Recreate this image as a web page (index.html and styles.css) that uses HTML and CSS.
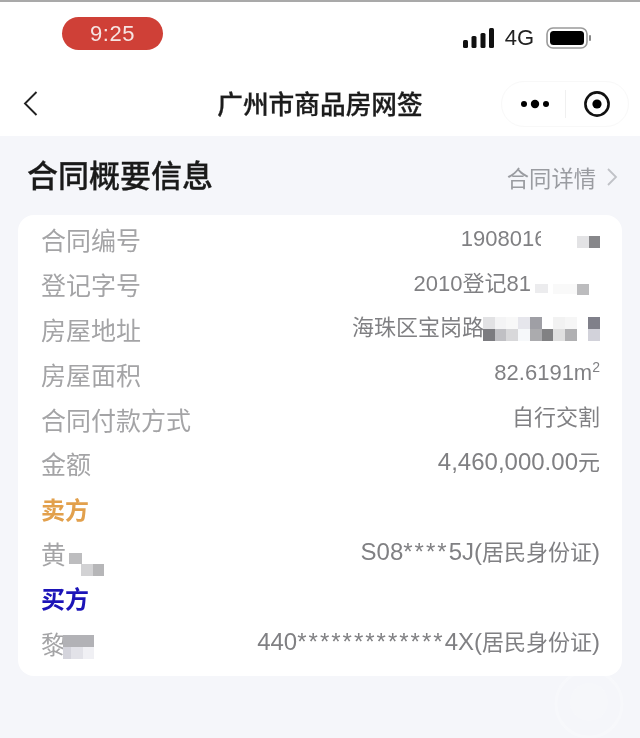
FILE: index.html
```html
<!DOCTYPE html>
<html lang="zh-CN">
<head>
    <meta charset="UTF-8">
    <meta name="viewport" content="width=device-width, initial-scale=1.0">
    <title>广州市商品房网签</title>
    <link rel="stylesheet" href="styles.css">
</head>
<body>

    <div class="page">
        <!-- 状态栏 -->
        <div class="status-bar">
            <span class="time-pill">9:25</span>
            <div class="status-icons">
                <svg class="signal" width="31" height="20" viewBox="0 0 31 20">
                    <rect x="0" y="12" width="5" height="8" rx="1.5"/>
                    <rect x="8.5" y="8" width="5" height="12" rx="1.5"/>
                    <rect x="17.5" y="5" width="5" height="15" rx="1.5"/>
                    <rect x="26" y="0" width="5" height="20" rx="1.5"/>
                </svg>
                <span class="network">4G</span>
                <svg class="battery" width="46" height="22" viewBox="0 0 46 22">
                    <rect x="1" y="1" width="40" height="20" rx="6" fill="none" stroke="#9a9a9a" stroke-width="1.6"/>
                    <rect x="4" y="4" width="34" height="14" rx="3.5" fill="#000"/>
                    <rect x="43" y="8" width="2" height="6" rx="1" fill="#888"/>
                </svg>
            </div>
        </div>

        <!-- 导航栏 -->
        <div class="nav-bar">
            <svg class="back" width="15" height="25" viewBox="0 0 15 25">
                <path d="M13.5 1 L2 12.5 L13.5 24" fill="none" stroke="#222" stroke-width="1.9"/>
            </svg>
            <h1 class="nav-title">广州市商品房网签</h1>
            <div class="capsule">
                <svg width="30" height="12" viewBox="0 0 30 12">
                    <circle cx="4" cy="6" r="3"/>
                    <circle cx="15" cy="6" r="4.2"/>
                    <circle cx="26" cy="6" r="3"/>
                </svg>
                <span class="capsule-line"></span>
                <svg width="28" height="28" viewBox="0 0 28 28">
                    <circle cx="14" cy="14" r="11.6" fill="none" stroke="#111" stroke-width="2.6"/>
                    <circle cx="14" cy="14" r="4.6"/>
                </svg>
            </div>
        </div>

        <!-- 合同内容 -->
        <div class="content">
            <div class="section-head">
                <h2>合同概要信息</h2>
                <div class="detail-link">
                    合同详情
                    <svg width="12" height="20" viewBox="0 0 12 20">
                        <path d="M2 2 L10 10 L2 18" fill="none" stroke="#c0c2c7" stroke-width="1.8"/>
                    </svg>
                </div>
            </div>

            <div class="card">
                <div class="row">
                    <span class="label">合同编号</span>
                    <div class="value">
                        <span>1908016</span>
                        <svg class="smudge-1" width="59" height="26" viewBox="0 0 59 26" shape-rendering="crispEdges">
                            <rect x="0" y="0" width="36" height="26" fill="#fff"/>
                            <rect x="36" y="10" width="11.5" height="12" fill="#e3e3e5"/>
                            <rect x="47.5" y="10" width="11.5" height="12" fill="#87878a"/>
                        </svg>
                    </div>
                </div>
                <div class="row">
                    <span class="label">登记字号</span>
                    <div class="value">
                        <span>2010登记81</span>
                        <svg class="smudge-2" width="69" height="26" viewBox="0 0 69 26" shape-rendering="crispEdges">
                            <rect x="4" y="13" width="13" height="9" fill="#ececee"/>
                            <rect x="22" y="13" width="24" height="10" fill="#f9f9f9"/>
                            <rect x="46" y="13" width="11.5" height="11" fill="#bcbcbe"/>
                        </svg>
                    </div>
                </div>
                <div class="row">
                    <span class="label">房屋地址</span>
                    <div class="value">
                        <span>海珠区宝岗路</span>
                        <svg class="mosaic-3" width="117" height="24" viewBox="0 0 10 2" preserveAspectRatio="none" shape-rendering="crispEdges">
                            <rect x="0" y="0" width="1" height="1" fill="#e2e2e4"/>
                            <rect x="1" y="0" width="1" height="1" fill="#f4f4f5"/>
                            <rect x="2" y="0" width="1" height="1" fill="#f8f8f8"/>
                            <rect x="3" y="0" width="1" height="1" fill="#e6e6ec"/>
                            <rect x="4" y="0" width="1" height="1" fill="#9f9fa5"/>
                            <rect x="6" y="0" width="1" height="1" fill="#f2f2f2"/>
                            <rect x="7" y="0" width="1" height="1" fill="#f6f6f6"/>
                            <rect x="9" y="0" width="1" height="1" fill="#80808a"/>
                            <rect x="0" y="1" width="1" height="1" fill="#7c7c80"/>
                            <rect x="1" y="1" width="1" height="1" fill="#c0c0c4"/>
                            <rect x="2" y="1" width="1" height="1" fill="#d8d8da"/>
                            <rect x="3" y="1" width="1" height="1" fill="#f6f8fa"/>
                            <rect x="4" y="1" width="1" height="1" fill="#ababae"/>
                            <rect x="5" y="1" width="1" height="1" fill="#818183"/>
                            <rect x="6" y="1" width="1" height="1" fill="#e0e0e0"/>
                            <rect x="7" y="1" width="1" height="1" fill="#b0b0b2"/>
                            <rect x="9" y="1" width="1" height="1" fill="#d2d2da"/>
                        </svg>
                    </div>
                </div>
                <div class="row">
                    <span class="label">房屋面积</span>
                    <div class="value"><span>82.6191m<sup>2</sup></span></div>
                </div>
                <div class="row">
                    <span class="label">合同付款方式</span>
                    <div class="value"><span>自行交割</span></div>
                </div>
                <div class="row">
                    <span class="label">金额</span>
                    <div class="value"><span><span class="num">4,460,000.00</span>元</span></div>
                </div>
                <div class="row">
                    <span class="party seller">卖方</span>
                </div>
                <div class="row">
                    <div class="name">
                        <span class="label">黄</span>
                        <svg class="mosaic-name-1" width="38" height="23" viewBox="0 0 38 23" shape-rendering="crispEdges">
                            <rect x="3" y="0" width="13" height="11" fill="#bdbdbf"/>
                            <rect x="15" y="11" width="12" height="12" fill="#d2d2d4"/>
                            <rect x="27" y="11" width="11" height="12" fill="#b6b6b8"/>
                        </svg>
                    </div>
                    <div class="value"><span><span class="num">S08<span class="stars">****</span>5J(</span>居民身份证<span class="num">)</span></span></div>
                </div>
                <div class="row">
                    <span class="party buyer">买方</span>
                </div>
                <div class="row">
                    <div class="name">
                        <span class="label">黎</span>
                        <svg class="mosaic-name-2" width="31" height="24" viewBox="0 0 31 24" shape-rendering="crispEdges">
                            <rect x="0" y="0" width="31" height="12" fill="#b2b2b6"/>
                            <rect x="0" y="12" width="8" height="12" fill="#d4d4dc"/>
                            <rect x="8" y="12" width="12" height="12" fill="#e2e2e8"/>
                            <rect x="20" y="12" width="11" height="12" fill="#f0f0f4"/>
                        </svg>
                    </div>
                    <div class="value"><span><span class="num">440<span class="stars">*************</span>4X(</span>居民身份证<span class="num">)</span></span></div>
                </div>
            </div>
        </div>

        <!-- 水印 -->
        <svg class="watermark" width="72" height="72" viewBox="0 0 72 72">
            <circle cx="36" cy="36" r="33" fill="none" stroke="#fff" stroke-width="3" opacity=".25"/>
            <circle cx="36" cy="34" r="19" fill="#fff" opacity=".15"/>
        </svg>
    </div>

</body>
</html>
```

FILE: styles.css
```css
/* 页面 */
html, body {
    margin: 0;
    padding: 0;
}

body {
    font-family: "Liberation Sans", "Noto Sans CJK SC", sans-serif;
    background-color: #f5f6fa;
}

.page {
    position: relative;
    width: 640px;
    height: 738px;
    overflow: hidden;
    background-color: #f5f6fa;
    filter: blur(0.5px);
}

/* 状态栏 */
.status-bar {
    height: 69px;
    box-sizing: border-box;
    background-color: #fff;
    border-top: 2px solid #a9a9a9;
    padding: 15px 48px 0 62px;
    display: flex;
    justify-content: space-between;
    align-items: flex-start;
}

.time-pill {
    width: 101px;
    height: 33px;
    border-radius: 17px;
    background-color: #cf4037;
    color: #f6e4e2;
    font-size: 22px;
    line-height: 33px;
    text-align: center;
    letter-spacing: 0.5px;
}

.status-icons {
    display: flex;
    align-items: center;
    margin-top: 10px;
}

.signal {
    fill: #111;
}

.network {
    margin-left: 11px;
    font-size: 22px;
    line-height: 22px;
    color: #222;
}

.battery {
    margin-left: 12px;
}

/* 导航栏 */
.nav-bar {
    height: 67px;
    background-color: #fff;
    display: flex;
    align-items: center;
    justify-content: space-between;
    padding: 0 11px 0 23px;
    position: relative;
}

.back {
    margin-top: 2px;
}

.nav-title {
    position: absolute;
    left: 0;
    right: 0;
    margin: 0;
    text-align: center;
    font-size: 25.7px;
    font-weight: 500;
    color: #1c1c1c;
    -webkit-text-stroke: 0.3px #1c1c1c;
}

.capsule {
    width: 128px;
    height: 46px;
    box-sizing: border-box;
    border: 1px solid #f8f8f8;
    border-radius: 23px;
    display: flex;
    align-items: center;
    padding-left: 18px;
    margin-top: 2px;
}

.capsule-line {
    width: 1px;
    height: 28px;
    margin: 0 17px 0 15px;
    background-color: #f0f0f0;
}

/* 内容 */
.section-head {
    display: flex;
    justify-content: space-between;
    align-items: center;
    padding: 21px 22px 19px 27px;
}

.section-head h2 {
    margin: 0;
    font-size: 31px;
    line-height: 39px;
    font-weight: 500;
    color: #1a1a1a;
    -webkit-text-stroke: 0.3px #1a1a1a;
}

.detail-link {
    display: flex;
    align-items: center;
    gap: 10px;
    font-size: 22.3px;
    color: #9a9ca1;
}

.card {
    margin: 0 18px;
    height: 461px;
    box-sizing: border-box;
    padding: 2px 22px 0 23px;
    background-color: #fff;
    border-radius: 16px;
}

.row {
    height: 44.8px;
    display: flex;
    align-items: center;
    justify-content: space-between;
}

.label {
    font-size: 25px;
    color: #a4a4a6;
}

.value {
    display: flex;
    align-items: center;
    font-size: 22px;
    line-height: 26px;
    color: #808083;
    white-space: nowrap;
    padding-bottom: 1px;
}

.value sup {
    font-size: 14px;
    line-height: 0;
}

/* 下方几行的数字稍大 */
.num {
    font-size: 24px;
}

.stars {
    letter-spacing: 2px;
}

.smudge-1 {
    margin-left: -5.4px;
}

.smudge-2 {
    margin-left: 0;
}

.mosaic-3 {
    margin-left: -1px;
    margin-top: 2px;
}

.party {
    font-size: 24px;
    font-weight: 700;
}

.seller {
    color: #e2a04c;
}

.buyer {
    color: #1c14b8;
}

.name {
    display: flex;
    align-items: center;
}

.mosaic-name-1 {
    margin-top: 24px;
}

.mosaic-name-2 {
    margin-left: -3px;
    margin-top: 8px;
}

/* 水印 */
.watermark {
    position: absolute;
    left: 553px;
    top: 668px;
}
```
